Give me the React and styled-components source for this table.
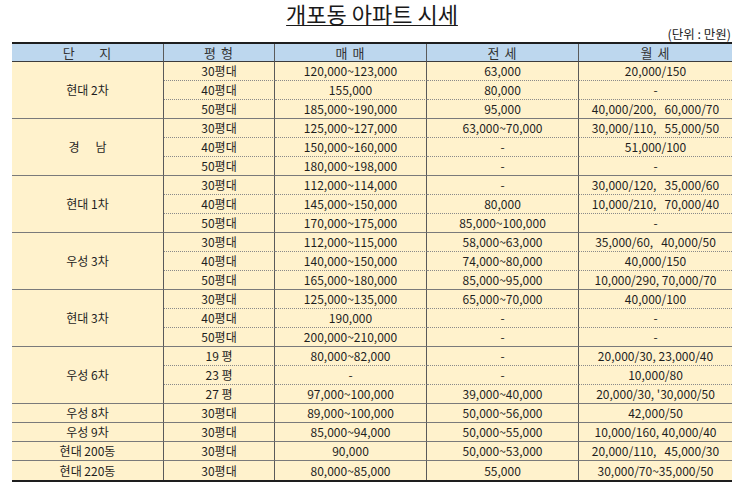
import styled, { createGlobalStyle } from "styled-components";

const GlobalStyle = createGlobalStyle`
  body {
    margin: 0;
    background: #ffffff;
    font-family: "Noto Sans CJK KR", "Noto Sans", sans-serif;
  }
`;

const Page = styled.div`
  width: 720px;
  padding-left: 12px;
`;

const Title = styled.div`
  height: 28px;
  font-size: 22px;
  line-height: 27px;
  text-align: center;
  color: #1a1a1a;

  span {
    text-decoration: underline;
    text-decoration-thickness: 1px;
    text-underline-offset: 2px;
  }
`;

const Unit = styled.div`
  height: 14px;
  font-size: 12.5px;
  line-height: 12px;
  text-align: right;
  color: #222;
  padding-right: 1px;
`;

const Grid = styled.div`
  display: grid;
  grid-template-columns: 152px 111px 152px 152px 153px;
  grid-template-rows: 18px repeat(22, 19px);
  border-top: 2px solid #1e1e1e;
  border-bottom: 2px solid #1e1e1e;
  background: #fff2cc;
`;

const HeadCell = styled.div`
  box-sizing: border-box;
  display: flex;
  align-items: center;
  justify-content: center;
  background: #bdd7ee;
  border-bottom: 1px solid #3c3c3c;
  border-right: ${(p) => (p.$last ? "none" : "1px solid #5a5a5a")};
  font-size: 13px;
  letter-spacing: 1px;
  color: #333;
  white-space: pre;
  line-height: 1;
`;

const Cell = styled.div`
  box-sizing: border-box;
  display: flex;
  align-items: center;
  justify-content: center;
  border-right: ${(p) => (p.$last ? "none" : "1px solid #5a5a5a")};
  border-bottom: ${(p) =>
    p.$sep === "dotted"
      ? "1px dotted #8a8a8a"
      : p.$sep === "solid"
      ? "1px solid #7a7a7a"
      : "none"};
  font-size: 12px;
  color: #1e1e1e;
  white-space: pre;
  line-height: 1;
  grid-row: ${(p) => (p.$span ? `span ${p.$span}` : "auto")};
`;

const heads = ["단      지", "평 형", "매 매", "전 세", "월 세"];

const groups = [
  {
    name: "현대 2차",
    rows: [
      ["30평대", "120,000~123,000", "63,000", "20,000/150"],
      ["40평대", "155,000", "80,000", "-"],
      ["50평대", "185,000~190,000", "95,000", "40,000/200,   60,000/70"],
    ],
  },
  {
    name: "경      남",
    rows: [
      ["30평대", "125,000~127,000", "63,000~70,000", "30,000/110,   55,000/50"],
      ["40평대", "150,000~160,000", "-", "51,000/100"],
      ["50평대", "180,000~198,000", "-", "-"],
    ],
  },
  {
    name: "현대 1차",
    rows: [
      ["30평대", "112,000~114,000", "-", "30,000/120,   35,000/60"],
      ["40평대", "145,000~150,000", "80,000", "10,000/210,   70,000/40"],
      ["50평대", "170,000~175,000", "85,000~100,000", "-"],
    ],
  },
  {
    name: "우성 3차",
    rows: [
      ["30평대", "112,000~115,000", "58,000~63,000", "35,000/60,   40,000/50"],
      ["40평대", "140,000~150,000", "74,000~80,000", "40,000/150"],
      ["50평대", "165,000~180,000", "85,000~95,000", "10,000/290, 70,000/70"],
    ],
  },
  {
    name: "현대 3차",
    rows: [
      ["30평대", "125,000~135,000", "65,000~70,000", "40,000/100"],
      ["40평대", "190,000", "-", "-"],
      ["50평대", "200,000~210,000", "-", "-"],
    ],
  },
  {
    name: "우성 6차",
    rows: [
      ["19 평", "80,000~82,000", "-", "20,000/30, 23,000/40"],
      ["23 평", "-", "-", "10,000/80"],
      ["27 평", "97,000~100,000", "39,000~40,000", "20,000/30, '30,000/50"],
    ],
  },
  {
    name: "우성 8차",
    rows: [["30평대", "89,000~100,000", "50,000~56,000", "42,000/50"]],
  },
  {
    name: "우성 9차",
    rows: [["30평대", "85,000~94,000", "50,000~55,000", "10,000/160, 40,000/40"]],
  },
  {
    name: "현대 200동",
    rows: [["30평대", "90,000", "50,000~53,000", "20,000/110,   45,000/30"]],
  },
  {
    name: "현대 220동",
    rows: [["30평대", "80,000~85,000", "55,000", "30,000/70~35,000/50"]],
  },
];

export default function App() {
  return (
    <>
      <GlobalStyle />
      <Page>
        <Title>
          <span>개포동 아파트 시세</span>
        </Title>
        <Unit>(단위 : 만원)</Unit>
        <Grid>
          {heads.map((h, i) => (
            <HeadCell key={h} $last={i === heads.length - 1}>
              {h}
            </HeadCell>
          ))}
          {groups.map((g, gi) => {
            const lastGroup = gi === groups.length - 1;
            return [
              <Cell
                key={g.name}
                $span={g.rows.length}
                $sep={lastGroup ? "none" : "solid"}
              >
                {g.name}
              </Cell>,
              ...g.rows.map((r, ri) => {
                const lastRow = ri === g.rows.length - 1;
                const sep = lastRow ? (lastGroup ? "none" : "solid") : "dotted";
                return r.map((v, ci) => (
                  <Cell key={`${gi}-${ri}-${ci}`} $sep={sep} $last={ci === 3}>
                    {v}
                  </Cell>
                ));
              }),
            ];
          })}
        </Grid>
      </Page>
    </>
  );
}
